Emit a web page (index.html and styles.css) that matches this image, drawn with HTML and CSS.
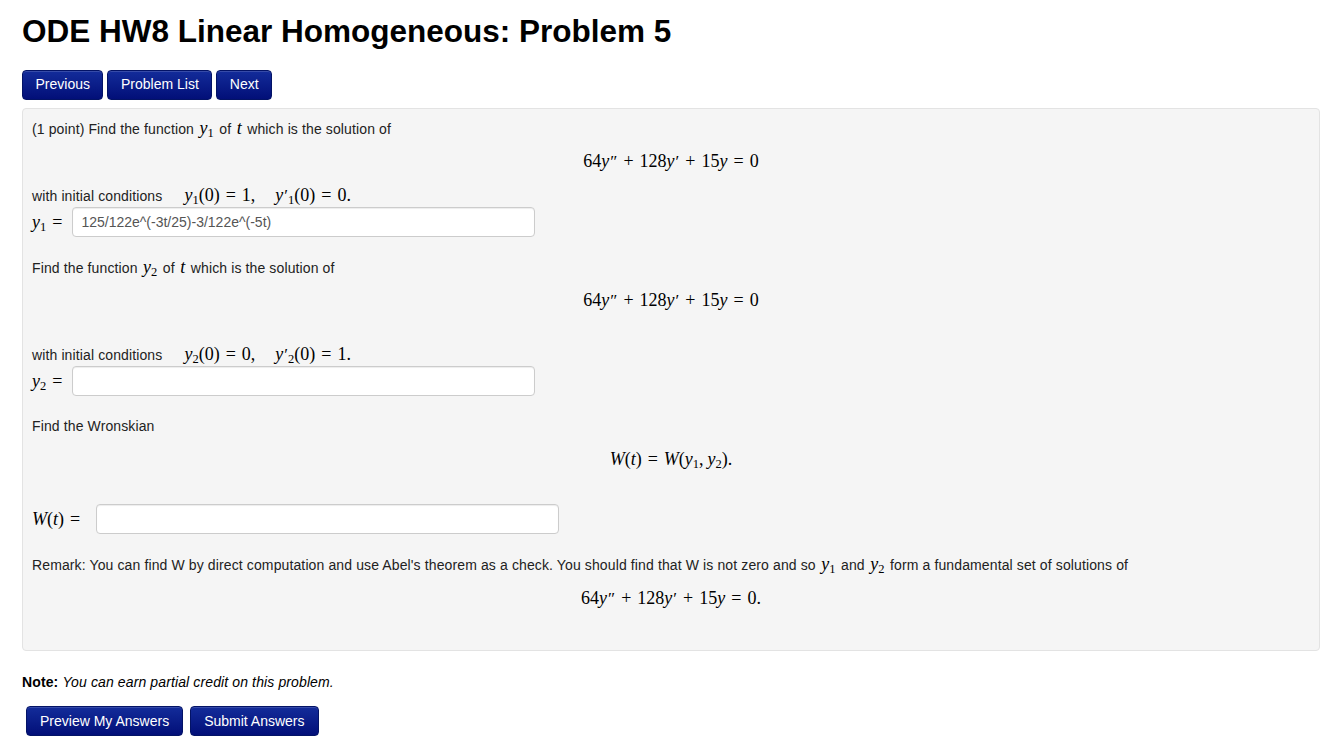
FILE: index.html
```html
<!DOCTYPE html>
<html>
<head>
<meta charset="utf-8">
<title>ODE HW8 Linear Homogeneous: Problem 5</title>
<link rel="stylesheet" href="styles.css">
</head>
<body>
<div class="page">
  <h2 class="title">ODE HW8 Linear Homogeneous: Problem 5</h2>
  <div class="nav">
    <a class="btn">Previous</a>
    <a class="btn">Problem List</a>
    <a class="btn">Next</a>
  </div>

  <div class="problem">
    <p class="line">(1 point) Find the function <span class="m in"><i>y</i><sub>1</sub></span> of <span class="m in"><i>t</i></span> which is the solution of</p>
    <div class="display d1"><span class="m">64<i>y</i><span class="pr">″</span><span class="op">+</span>128<i>y</i><span class="pr">′</span><span class="op">+</span>15<i>y</i><span class="op">=</span>0</span></div>
    <p class="line ic">with initial conditions <span class="m quad"><i>y</i><sub>1</sub>(0)<span class="op">=</span>1,<span class="qd"></span><i>y</i><span class="pr">′</span><sub class="tuck">1</sub>(0)<span class="op">=</span>0.</span></p>
    <div class="answer">
      <span class="m lbl"><i>y</i><sub>1</sub><span class="op">=</span></span>
      <input class="ans" type="text" value="125/122e^(-3t/25)-3/122e^(-5t)">
    </div>

    <p class="line gap20">Find the function <span class="m in"><i>y</i><sub>2</sub></span> of <span class="m in"><i>t</i></span> which is the solution of</p>
    <div class="display d1"><span class="m">64<i>y</i><span class="pr">″</span><span class="op">+</span>128<i>y</i><span class="pr">′</span><span class="op">+</span>15<i>y</i><span class="op">=</span>0</span></div>
    <p class="line ic2">with initial conditions <span class="m quad"><i>y</i><sub>2</sub>(0)<span class="op">=</span>0,<span class="qd"></span><i>y</i><span class="pr">′</span><sub class="tuck">2</sub>(0)<span class="op">=</span>1.</span></p>
    <div class="answer">
      <span class="m lbl"><i>y</i><sub>2</sub><span class="op">=</span></span>
      <input class="ans" type="text" value="">
    </div>

    <p class="line gap20">Find the Wronskian</p>
    <div class="display d1"><span class="m"><i>W</i>(<i>t</i>)<span class="op">=</span><i>W</i>(<i>y</i><sub>1</sub>,<span class="thin"></span><i>y</i><sub>2</sub>).</span></div>
    <div class="answer wans">
      <span class="m lbl"><i>W</i>(<i>t</i>)<span class="op">=</span></span>
      <input class="ans" type="text" value="">
    </div>

    <p class="line gap20">Remark: You can find W by direct computation and use Abel's theorem as a check. You should find that W is not zero and so <span class="m in"><i>y</i><sub>1</sub></span> and <span class="m in"><i>y</i><sub>2</sub></span> form a fundamental set of solutions of</p>
    <div class="display d2"><span class="m">64<i>y</i><span class="pr">″</span><span class="op">+</span>128<i>y</i><span class="pr">′</span><span class="op">+</span>15<i>y</i><span class="op">=</span>0.</span></div>
  </div>

  <p class="note"><b>Note:</b> <i>You can earn partial credit on this problem.</i></p>
  <div class="submit">
    <a class="btn btn-lg">Preview My Answers</a>
    <a class="btn btn-lg">Submit Answers</a>
  </div>
</div>
</body>
</html>
```

FILE: styles.css
```css
html, body {
  margin: 0;
  padding: 0;
  background: #ffffff;
}

body {
  font-family: "Liberation Sans", Arial, sans-serif;
  font-size: 14px;
  line-height: 20px;
  color: #222;
}

.page {
  padding: 11px 16px 0 22px;
}

.title {
  margin: 0;
  font-size: 31.5px;
  line-height: 40px;
  font-weight: bold;
  color: #000;
}

.nav {
  display: flex;
  gap: 4px;
  margin-top: 19px;
}

.btn {
  display: inline-block;
  padding: 4px 12.5px 5px;
  line-height: 19px;
  font-size: 14px;
  color: #fff;
  background: linear-gradient(to bottom, #132c9a, #020f78);
  border: 1px solid #031366;
  border-radius: 4px;
  box-shadow: inset 0 1px 0 rgba(255,255,255,0.15);
  cursor: pointer;
}

.btn-lg {
  line-height: 20px;
  padding: 4px 13px;
}

.problem {
  margin-top: 8px;
  background: #f5f5f5;
  border: 1px solid #e3e3e3;
  border-radius: 4px;
  padding: 9px 9px 39px 9px;
  letter-spacing: 0.12px;
}

.line {
  margin: 0;
  height: 20px;
  line-height: 20px;
  white-space: nowrap;
}

.m {
  font-family: "Liberation Serif", "Times New Roman", serif;
  font-size: 18px;
  color: #000;
  letter-spacing: 0;
}

.m.in {
  margin: 0 1.5px;
}

.m i {
  font-style: italic;
}

.m sub {
  font-size: 12.5px;
  line-height: 0;
  vertical-align: -3px;
  font-style: normal;
}

.m sub.tuck {
  margin-left: 0;
}

.pr {
  font-size: 17px;
  margin-left: 1px;
}

.op {
  margin: 0 6px;
}

.thin {
  display: inline-block;
  width: 4px;
}

.display {
  height: 26px;
  line-height: 26px;
  text-align: center;
  margin-top: 10px;
}

.d2 {
  margin-top: 11px;
}

.quad {
  margin-left: 18px;
}

.qd {
  display: inline-block;
  width: 20px;
}

.ic {
  margin-top: 11px;
}

.ic2 {
  margin-top: 31px;
}

.answer {
  display: flex;
  align-items: center;
  gap: 10px;
  margin-top: 2px;
}

.wans {
  margin-top: 32px;
  gap: 16px;
}

.lbl {
  white-space: nowrap;
}

.lbl .op {
  margin-right: 0;
}

.ans {
  box-sizing: border-box;
  width: 463px;
  height: 30px;
  margin: 0;
  padding: 0 8px;
  border: 1px solid #cccccc;
  border-radius: 4px;
  background: #fff;
  box-shadow: inset 0 1px 1px rgba(0,0,0,0.075);
  font-family: "Liberation Sans", Arial, sans-serif;
  font-size: 14px;
  color: #555;
}

.gap20 {
  margin-top: 20px;
}

.note {
  margin: 21px 0 0 0;
  line-height: 20px;
  color: #000;
  letter-spacing: 0.12px;
}

.note b {
  font-weight: bold;
}

.submit {
  display: flex;
  gap: 7px;
  margin: 14px 0 0 4px;
}
```
